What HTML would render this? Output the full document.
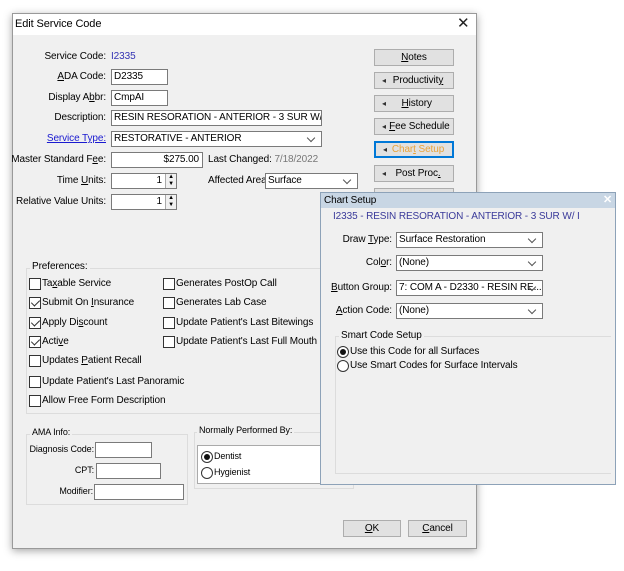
<!DOCTYPE html>
<html><head><style>
*{box-sizing:border-box;margin:0;padding:0}
body{width:624px;height:571px;background:#fff;position:relative;overflow:hidden;font-family:"Liberation Sans",Tahoma,sans-serif;font-size:10px;color:#000;letter-spacing:-0.1px}
.a{position:absolute;white-space:nowrap}
.r{text-align:right}
.in{position:absolute;background:#fff;border:1px solid #7a7a7a;height:16px;line-height:14px;padding-left:2px;font-size:10px;overflow:hidden;white-space:nowrap}
.sel::after{content:"";position:absolute;right:7px;top:3px;width:5px;height:5px;border-right:1px solid #555;border-bottom:1px solid #555;transform:rotate(45deg)}
.btn{position:absolute;background:#e1e1e1;border:1px solid #adadad;height:17px;line-height:15px;text-align:center;font-size:10px;white-space:nowrap}
.btn .ar{position:absolute;left:7px;top:0;font-size:8px;color:#333}
.cb{position:absolute;width:12px;height:12px;border:1px solid #333;background:#fff}
.cb.c::after{content:"";position:absolute;left:3px;top:0px;width:4px;height:7px;border-right:1px solid #333;border-bottom:1px solid #333;transform:rotate(45deg)}
.rd{position:absolute;width:12px;height:12px;border:1px solid #333;border-radius:50%;background:#fff}
.rd.c::after{content:"";position:absolute;left:2px;top:2px;width:6px;height:6px;border-radius:50%;background:#111}
.grp{position:absolute;border:1px solid #dcdcdc}
.spin{position:absolute;right:0;top:0;width:11px;height:14px;border-left:1px solid #aaa;background:#f0f0f0;font-size:6px;line-height:7px;text-align:center}
u{text-decoration:underline}
</style></head><body>
<div class="a" style="left:12px;top:13px;width:465px;height:536px;background:#f0f0f0;border:1px solid #999;box-shadow:0 2px 8px rgba(0,0,0,.35)"></div>
<div class="a" style="left:13px;top:14px;width:463px;height:21px;background:#fff"></div>
<div class="a" style="left:15px;top:18px;font-size:11px">Edit Service Code</div>
<div class="a" style="left:457px;top:14px;font-size:15px;color:#222">✕</div>

<div class="a r" style="left:20px;width:86px;top:51px">Service Code:</div>
<div class="a" style="left:111px;top:51px;color:#3333b3">I2335</div>
<div class="a r" style="left:20px;width:86px;top:71px"><u>A</u>DA Code:</div>
<div class="in" style="left:111px;top:69px;width:57px">D2335</div>
<div class="a r" style="left:20px;width:86px;top:92px">Display A<u>b</u>br:</div>
<div class="in" style="left:111px;top:90px;width:57px">CmpAI</div>
<div class="a r" style="left:20px;width:86px;top:112px">Description:</div>
<div class="in" style="left:111px;top:110px;width:211px">RESIN RESORATION - ANTERIOR - 3 SUR W/ I</div>
<div class="a r" style="left:20px;width:86px;top:133px;color:#1a1ad0"><u>Service Type:</u></div>
<div class="in sel" style="left:111px;top:131px;width:211px">RESTORATIVE - ANTERIOR</div>
<div class="a r" style="left:10px;width:96px;top:154px">Master Standard F<u>e</u>e:</div>
<div class="in r" style="left:111px;top:152px;width:92px;padding-right:3px">$275.00</div>
<div class="a" style="left:208px;top:154px">Last Changed: <span style="color:#777">7/18/2022</span></div>
<div class="a r" style="left:20px;width:86px;top:175px">Time <u>U</u>nits:</div>
<div class="in r" style="left:111px;top:173px;width:66px;padding-right:14px">1<div class="spin">▲<br>▼</div></div>
<div class="a" style="left:208px;top:175px">Affected Area:</div>
<div class="in sel" style="left:265px;top:173px;width:93px">Surface</div>
<div class="a r" style="left:10px;width:96px;top:196px">Relative Value Units:</div>
<div class="in r" style="left:111px;top:194px;width:66px;padding-right:14px">1<div class="spin">▲<br>▼</div></div>

<div class="btn" style="left:374px;top:49px;width:80px"><u>N</u>otes</div>
<div class="btn" style="left:374px;top:72px;width:80px"><span class="ar">◂</span>&nbsp;&nbsp;&nbsp;Productivit<u>y</u></div>
<div class="btn" style="left:374px;top:95px;width:80px"><span class="ar">◂</span>&nbsp;&nbsp;<u>H</u>istory</div>
<div class="btn" style="left:374px;top:118px;width:80px"><span class="ar">◂</span>&nbsp;&nbsp;&nbsp;&nbsp;<u>F</u>ee Schedule</div>
<div class="btn" style="left:374px;top:141px;width:80px;border:2px solid #0078d7;line-height:13px;color:#e8a33a"><span class="ar">◂</span>&nbsp;&nbsp;&nbsp;Char<u>t</u> Setup</div>
<div class="btn" style="left:374px;top:165px;width:80px"><span class="ar">◂</span>&nbsp;&nbsp;&nbsp;Post Proc<u>.</u></div>
<div class="btn" style="left:374px;top:188px;width:80px"></div>

<div class="grp" style="left:26px;top:268px;width:300px;height:146px"></div>
<div class="a" style="left:30px;top:261px;background:#f0f0f0;padding:0 2px">Preferences:</div>
<div class="cb" style="left:29px;top:278px"></div><div class="a" style="left:42px;top:278px">Ta<u>x</u>able Service</div>
<div class="cb c" style="left:29px;top:297px"></div><div class="a" style="left:42px;top:297px">Submit On <u>I</u>nsurance</div>
<div class="cb c" style="left:29px;top:317px"></div><div class="a" style="left:42px;top:317px">Apply Di<u>s</u>count</div>
<div class="cb c" style="left:29px;top:336px"></div><div class="a" style="left:42px;top:336px">Acti<u>v</u>e</div>
<div class="cb" style="left:29px;top:355px"></div><div class="a" style="left:42px;top:355px">Updates <u>P</u>atient Recall</div>
<div class="cb" style="left:29px;top:376px"></div><div class="a" style="left:42px;top:376px">Update Patient's Last Panoramic</div>
<div class="cb" style="left:29px;top:395px"></div><div class="a" style="left:42px;top:395px">Allow Free Form Description</div>
<div class="cb" style="left:163px;top:278px"></div><div class="a" style="left:176px;top:278px">Generates PostOp Call</div>
<div class="cb" style="left:163px;top:297px"></div><div class="a" style="left:176px;top:297px">Generates Lab Case</div>
<div class="cb" style="left:163px;top:317px"></div><div class="a" style="left:176px;top:317px">Update Patient's Last Bitewings</div>
<div class="cb" style="left:163px;top:336px"></div><div class="a" style="left:176px;top:336px">Update Patient's Last Full Mouth Series</div>

<div class="grp" style="left:26px;top:434px;width:162px;height:71px"></div>
<div class="a" style="left:30px;top:427px;background:#f0f0f0;padding:0 2px;font-size:9px">AMA Info:</div>
<div class="a r" style="left:20px;width:74px;top:444px;font-size:9px">Diagnosis Code:</div>
<div class="in" style="left:95px;top:442px;width:57px"></div>
<div class="a r" style="left:20px;width:74px;top:465px;font-size:9px">CPT:</div>
<div class="in" style="left:96px;top:463px;width:65px"></div>
<div class="a r" style="left:20px;width:73px;top:486px;font-size:9px">Modifier:</div>
<div class="in" style="left:94px;top:484px;width:90px"></div>

<div class="grp" style="left:194px;top:432px;width:160px;height:57px"></div>
<div class="a" style="left:197px;top:425px;background:#f0f0f0;padding:0 2px;font-size:9px">Normally Performed By:</div>
<div class="a" style="left:197px;top:445px;width:150px;height:39px;background:#fff;border:1px solid #aaa"></div>
<div class="rd c" style="left:201px;top:451px"></div><div class="a" style="left:214px;top:451px;font-size:9px">Dentist</div>
<div class="rd" style="left:201px;top:467px"></div><div class="a" style="left:214px;top:467px;font-size:9px">Hygienist</div>

<div class="btn" style="left:343px;top:520px;width:58px"><u>O</u>K</div>
<div class="btn" style="left:408px;top:520px;width:59px"><u>C</u>ancel</div>

<div class="a" style="left:320px;top:192px;width:296px;height:293px;background:#f0f0f0;border:1px solid #8da2b8"></div>
<div class="a" style="left:321px;top:193px;width:294px;height:15px;background:#c8d6e4"></div>
<div class="a" style="left:324px;top:195px">Chart Setup</div>
<div class="a" style="left:603px;top:193px;color:#fff;font-weight:bold;font-size:11px">✕</div>
<div class="a" style="left:333px;top:211px;color:#3a3a9a">I2335 - RESIN RESORATION - ANTERIOR - 3 SUR W/ I</div>
<div class="a r" style="left:320px;width:72px;top:234px">Draw <u>T</u>ype:</div>
<div class="in sel" style="left:396px;top:232px;width:147px">Surface Restoration</div>
<div class="a r" style="left:320px;width:72px;top:257px">Col<u>o</u>r:</div>
<div class="in sel" style="left:396px;top:255px;width:147px">(None)</div>
<div class="a r" style="left:320px;width:72px;top:282px"><u>B</u>utton Group:</div>
<div class="in sel" style="left:396px;top:280px;width:147px;padding-right:18px">7: COM A - D2330 - RESIN RE...</div>
<div class="a r" style="left:320px;width:72px;top:305px"><u>A</u>ction Code:</div>
<div class="in sel" style="left:396px;top:303px;width:147px">(None)</div>
<div class="a" style="left:335px;top:336px;width:276px;height:138px;border-top:1px solid #dcdcdc;border-left:1px solid #dcdcdc;border-bottom:1px solid #dcdcdc"></div>
<div class="a" style="left:339px;top:330px;background:#f0f0f0;padding:0 2px">Smart Code Setup</div>
<div class="rd c" style="left:337px;top:346px"></div><div class="a" style="left:350px;top:346px">Use this Code for all Surfaces</div>
<div class="rd" style="left:337px;top:360px"></div><div class="a" style="left:350px;top:360px">Use Smart Codes for Surface Intervals</div>
</body></html>
